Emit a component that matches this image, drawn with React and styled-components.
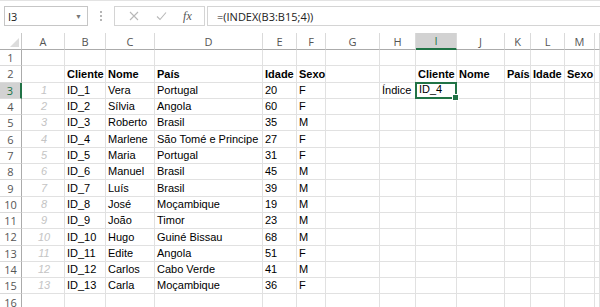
import styled, { createGlobalStyle } from "styled-components";

const Global = createGlobalStyle`
  html, body { margin: 0; padding: 0; background: #fff; overflow: hidden; }
  body { font-family: "Liberation Sans", Arial, sans-serif; }
`;

const COLS = [
  ["A", 43], ["B", 41], ["C", 49], ["D", 108], ["E", 34], ["F", 29], ["G", 54],
  ["H", 36], ["I", 41], ["J", 48], ["K", 26], ["L", 34], ["M", 30],
];

const ROW_H = 16.3;

const people = [
  ["Vera", "Portugal", 20, "F"],
  ["Sílvia", "Angola", 60, "F"],
  ["Roberto", "Brasil", 35, "M"],
  ["Marlene", "São Tomé e Principe", 27, "F"],
  ["Maria", "Portugal", 31, "F"],
  ["Manuel", "Brasil", 45, "M"],
  ["Luís", "Brasil", 39, "M"],
  ["José", "Moçambique", 19, "M"],
  ["João", "Timor", 23, "M"],
  ["Hugo", "Guiné Bissau", 68, "M"],
  ["Edite", "Angola", 51, "F"],
  ["Carlos", "Cabo Verde", 41, "M"],
  ["Carla", "Moçambique", 36, "F"],
];

const Page = styled.div`
  width: 600px;
  height: 307px;
  overflow: hidden;
  border-top: 1px solid #e3e3e3;
  box-sizing: border-box;
`;

const FormulaBar = styled.div`
  display: flex;
  align-items: stretch;
  height: 20px;
  margin: 5px 0 0 4px;
`;

const NameBox = styled.div`
  width: 84px;
  box-sizing: border-box;
  border: 1px solid #c6c6c6;
  display: flex;
  align-items: center;
  justify-content: space-between;
  padding: 0 5px 0 3px;
  font-family: "Open Sans", "Liberation Sans", sans-serif;
  font-size: 11px;
  color: #222;
`;

const Caret = styled.span`
  font-size: 7px;
  color: #777;
`;

const Kebab = styled.div`
  width: 26px;
  display: flex;
  flex-direction: column;
  align-items: center;
  justify-content: center;
  gap: 2px;
  & i {
    width: 2px;
    height: 2px;
    background: #b5b5b5;
  }
`;

const FxBox = styled.div`
  width: 91px;
  box-sizing: border-box;
  border: 1px solid #d4d4d4;
  display: flex;
  align-items: center;
  justify-content: space-around;
  padding: 0 4px 0 6px;
  color: #b0b0b0;
`;

const FxText = styled.span`
  font-family: "Liberation Serif", serif;
  font-style: italic;
  font-size: 12px;
  color: #555;
`;

const FormulaInput = styled.div`
  flex: 1;
  margin-left: 2px;
  box-sizing: border-box;
  border: 1px solid #d4d4d4;
  border-right: none;
  display: flex;
  align-items: center;
  padding-left: 9px;
  font-family: "Open Sans", "Liberation Sans", sans-serif;
  font-size: 11px;
  color: #222;
`;

const Sheet = styled.div`
  margin-top: 7px;
  display: grid;
  grid-template-columns: 22px ${COLS.map((c) => c[1] + "px").join(" ")} 1fr;
  grid-template-rows: 17px repeat(16, ${ROW_H}px);
`;

const Corner = styled.div`
  position: relative;
  border-right: 1px solid #c8c8c8;
  border-bottom: 1px solid #ababab;
  box-sizing: border-box;
  &::after {
    content: "";
    position: absolute;
    right: 2px;
    bottom: 2px;
    border-left: 9px solid transparent;
    border-bottom: 9px solid #dcdcdc;
  }
`;

const ColHead = styled.div`
  box-sizing: border-box;
  display: flex;
  align-items: center;
  justify-content: center;
  font-family: "Open Sans", "Liberation Sans", sans-serif;
  font-size: 11px;
  color: ${(p) => (p.$active ? "#217346" : "#555")};
  background: ${(p) => (p.$active ? "#d2d2d2" : "#fff")};
  border-right: 1px solid #dadada;
  border-bottom: ${(p) => (p.$active ? "2px solid #217346" : "1px solid #ababab")};
`;

const RowHead = styled.div`
  box-sizing: border-box;
  display: flex;
  align-items: center;
  justify-content: center;
  font-family: "Open Sans", "Liberation Sans", sans-serif;
  font-size: 11px;
  color: ${(p) => (p.$active ? "#217346" : "#555")};
  background: ${(p) => (p.$active ? "#d2d2d2" : "#fff")};
  border-right: ${(p) => (p.$active ? "2px solid #217346" : "1px solid #ababab")};
  border-bottom: 1px solid #dadada;
`;

const Cell = styled.div`
  position: relative;
  box-sizing: border-box;
  border-right: 1px solid #e1e1e1;
  border-bottom: 1px solid #e1e1e1;
  display: flex;
  align-items: flex-end;
  justify-content: ${(p) => (p.$center ? "center" : "flex-start")};
  padding: 0 0 1px 2px;
  white-space: nowrap;
  overflow: visible;
  font-size: 11px;
  line-height: 13px;
  font-weight: ${(p) => (p.$bold ? 700 : 400)};
  font-style: ${(p) => (p.$italic ? "italic" : "normal")};
  color: ${(p) => (p.$faint ? "#c4c4c4" : "#000")};
  z-index: ${(p) => (p.$over ? 1 : 0)};
`;

const Selected = styled(Cell)`
  border: 2px solid #217346;
  margin: -1px 0 0 -1px;
  padding-left: 2px;
  z-index: 2;
  &::after {
    content: "";
    position: absolute;
    right: -4px;
    bottom: -4px;
    width: 5px;
    height: 5px;
    background: #217346;
    border: 1px solid #fff;
  }
`;

const headers = ["Cliente", "Nome", "País", "Idade", "Sexo"];

function cellsFor(row) {
  const out = new Array(COLS.length).fill(null);
  if (row === 2) {
    headers.forEach((h, i) => {
      out[1 + i] = { text: h, bold: true };
      out[8 + i] = { text: h, bold: true };
    });
  }
  const idx = row - 3;
  if (idx >= 0 && idx < people.length) {
    const [name, country, age, sex] = people[idx];
    out[0] = { text: idx + 1, italic: true, faint: true, center: true };
    out[1] = { text: `ID_${idx + 1}` };
    out[2] = { text: name };
    out[3] = { text: country };
    out[4] = { text: age };
    out[5] = { text: sex };
  }
  if (row === 3) {
    out[7] = { text: "Índice" };
    out[8] = { text: "ID_4", selected: true };
  }
  return out;
}

export default function App() {
  const rows = Array.from({ length: 16 }, (_, i) => i + 1);
  return (
    <Page>
      <Global />
      <FormulaBar>
        <NameBox>
          I3 <Caret>▼</Caret>
        </NameBox>
        <Kebab>
          <i />
          <i />
          <i />
        </Kebab>
        <FxBox>
          <svg width="10" height="10" viewBox="0 0 10 10">
            <path d="M1 1 L9 9 M9 1 L1 9" stroke="#b8b8b8" strokeWidth="1.1" />
          </svg>
          <svg width="11" height="10" viewBox="0 0 11 10">
            <path d="M1 5.5 L4 8.5 L10 1.5" stroke="#b8b8b8" strokeWidth="1.1" fill="none" />
          </svg>
          <FxText>fx</FxText>
        </FxBox>
        <FormulaInput>=(INDEX(B3:B15;4))</FormulaInput>
      </FormulaBar>
      <Sheet>
        <Corner />
        {COLS.map(([l]) => (
          <ColHead key={l} $active={l === "I"}>
            {l}
          </ColHead>
        ))}
        <ColHead />
        {rows.map((r) => {
          const cells = cellsFor(r);
          return [
            <RowHead key={`h${r}`} $active={r === 3}>
              {r}
            </RowHead>,
            ...cells.map((c, ci) => {
              const key = `${r}-${ci}`;
              if (c && c.selected) return <Selected key={key}>{c.text}</Selected>;
              return (
                <Cell
                  key={key}
                  $bold={c && c.bold}
                  $italic={c && c.italic}
                  $faint={c && c.faint}
                  $center={c && c.center}
                  $over={!!c}
                >
                  {c ? c.text : ""}
                </Cell>
              );
            }),
            <Cell key={`${r}-end`} />,
          ];
        })}
      </Sheet>
    </Page>
  );
}
